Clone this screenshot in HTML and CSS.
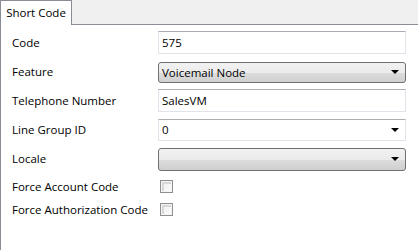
FILE: index.html
```html
<!DOCTYPE html>
<html lang="en">
<head>
  <meta charset="UTF-8" />
  <title>Short Code</title>
  <link rel="stylesheet" href="styles.css">
</head>
<body>

  <div class="tabs">
    <div class="tab">Short Code</div>
    <div class="tab-fill"></div>
  </div>

  <div class="panel">
    <div class="form">
      <label class="row-label">Code</label>
      <div class="textbox">575</div>

      <label class="row-label">Feature</label>
      <div class="combo combo-button">Voicemail Node<span class="arrow"></span></div>

      <label class="row-label">Telephone Number</label>
      <div class="textbox">SalesVM</div>

      <label class="row-label">Line Group ID</label>
      <div class="combo combo-edit">0<span class="arrow"></span></div>

      <label class="row-label">Locale</label>
      <div class="combo combo-button combo-tall"><span class="arrow"></span></div>
    </div>

    <div class="checks">
      <label class="row-label">Force Account Code</label>
      <span class="checkbox"></span>

      <label class="row-label">Force Authorization Code</label>
      <span class="checkbox"></span>
    </div>
  </div>

</body>
</html>
```

FILE: styles.css
```css
body {
  margin: 0;
  font-family: 'Open Sans', 'Noto Sans', sans-serif;
  font-size: 11.5px;
  color: #000;
  background: #fff;
  width: 418px;
  height: 250px;
  overflow: hidden;
}

.tabs {
  display: flex;
  height: 25px;
  background: #f0f0f0;
}

.tab {
  width: 72px;
  height: 25px;
  box-sizing: border-box;
  border: 1px solid #8c8c95;
  border-bottom: none;
  background: #fff;
  display: flex;
  align-items: center;
  justify-content: center;
  padding-bottom: 2px;
}

.tab-fill {
  flex: 1;
  border-bottom: 1px solid #8c8c95;
}

.panel {
  border-left: 1px solid #8c8c95;
  height: 225px;
  box-sizing: border-box;
  padding: 3px 12px 0 11px;
}

.form {
  display: grid;
  grid-template-columns: 146px 248px;
  grid-auto-rows: 29px;
  align-items: center;
}

.row-label {
  padding-bottom: 1px;
}

.textbox {
  height: 23px;
  box-sizing: border-box;
  border: 1px solid #e2e3ea;
  border-top-color: #abadb3;
  padding: 0 3px;
  display: flex;
  align-items: center;
}

.combo {
  position: relative;
  height: 21px;
  box-sizing: border-box;
  padding: 0 20px 0 3px;
  display: flex;
  align-items: center;
}

.combo-button {
  border: 1px solid #707070;
  border-radius: 3px;
  background: linear-gradient(to bottom, #f2f2f2 0%, #ebebeb 50%, #dddddd 51%, #cfcfcf 100%);
  margin-top: 1px;
}

.combo-tall {
  height: 23px;
}

.combo-edit {
  height: 22px;
  border: 1px solid #e2e3ea;
  border-top-color: #abadb3;
  background: #fff;
}

.arrow {
  position: absolute;
  right: 6px;
  top: 50%;
  margin-top: -2px;
  width: 0;
  height: 0;
  border-left: 4px solid transparent;
  border-right: 4px solid transparent;
  border-top: 4px solid #000;
}

.checks {
  display: grid;
  grid-template-columns: 148px 13px;
  grid-auto-rows: 23px;
  align-items: center;
  margin-top: 2px;
}

.checkbox {
  width: 13px;
  height: 13px;
  box-sizing: border-box;
  border: 1px solid #8e8f8f;
  background: #f4f4f4;
  box-shadow: inset 0 0 0 1px #f4f4f4, inset 1px 1px 0 2px #d8d8d8, inset -1px -1px 0 2px #f8f8f8;
}
```
